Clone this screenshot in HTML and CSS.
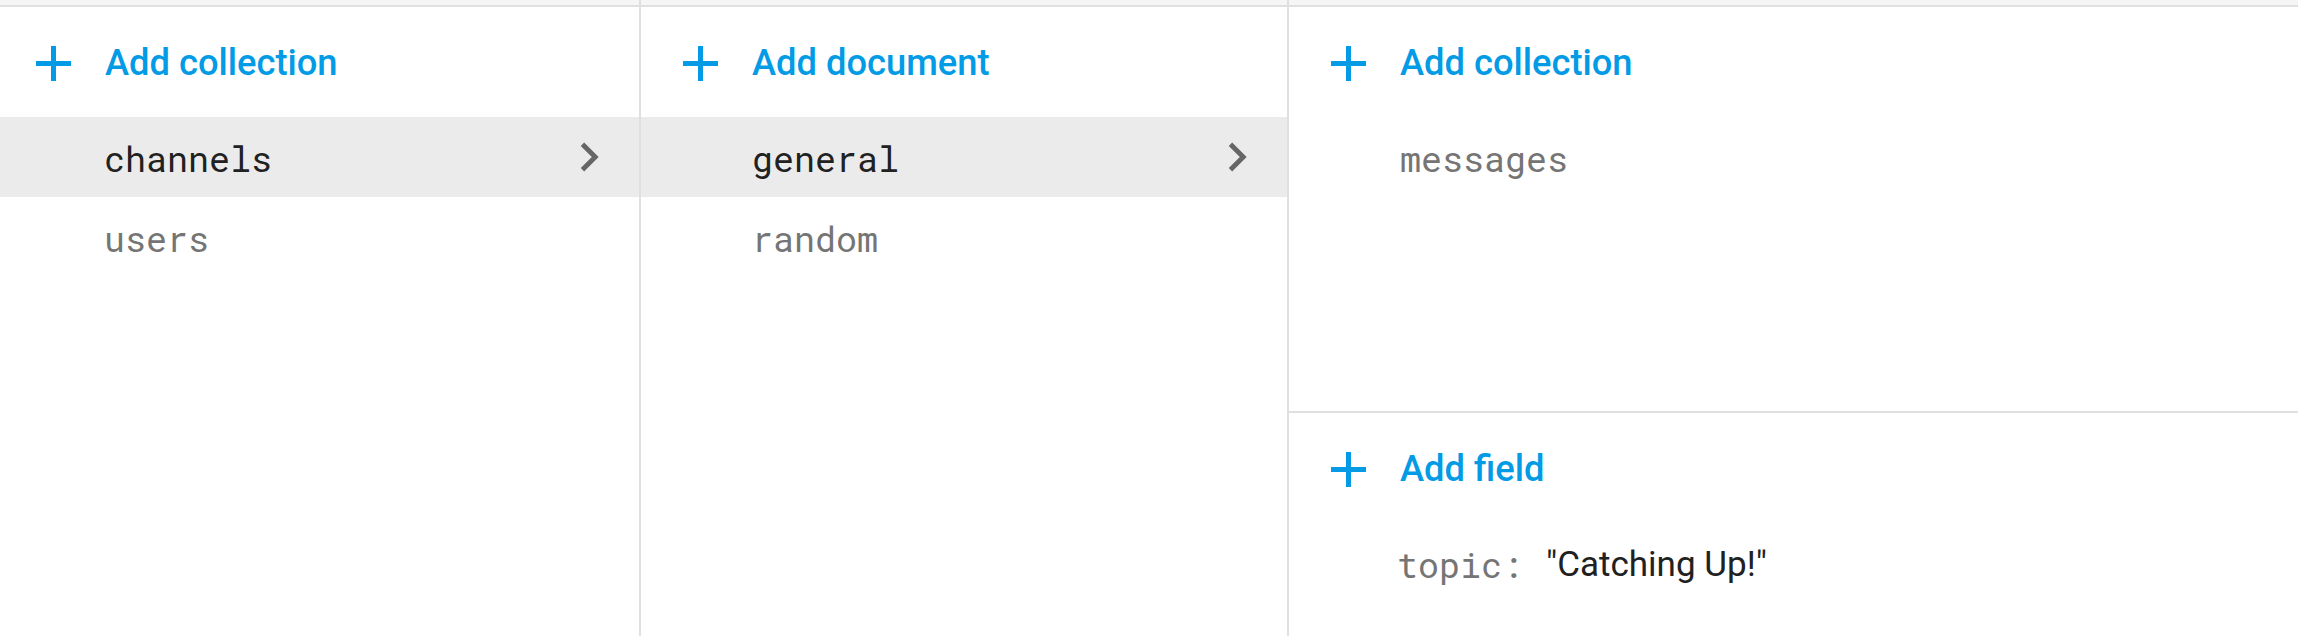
FILE: index.html
```html
<!DOCTYPE html>
<html lang="en">
<head>
<meta charset="utf-8">
<title>Firestore data</title>
<link rel="stylesheet" href="styles.css">
</head>
<body>
<div class="panels">
  <section class="col col-first">
    <div class="strip"></div>
    <div class="add-row">
      <svg class="plus" viewBox="5 5 14 14" aria-hidden="true"><path d="M19 13h-6v6h-2v-6H5v-2h6V5h2v6h6v2z"/></svg>
      <span class="add-label">Add collection</span>
    </div>
    <div class="item selected">
      <span class="name">channels</span>
      <svg class="chev" viewBox="0 0 24 24" aria-hidden="true"><path d="M10 6L8.59 7.41 13.17 12l-4.58 4.59L10 18l6-6z"/></svg>
    </div>
    <div class="item"><span class="name muted">users</span></div>
  </section>
  <section class="col col-second">
    <div class="strip"></div>
    <div class="add-row">
      <svg class="plus" viewBox="5 5 14 14" aria-hidden="true"><path d="M19 13h-6v6h-2v-6H5v-2h6V5h2v6h6v2z"/></svg>
      <span class="add-label">Add document</span>
    </div>
    <div class="item selected">
      <span class="name">general</span>
      <svg class="chev" viewBox="0 0 24 24" aria-hidden="true"><path d="M10 6L8.59 7.41 13.17 12l-4.58 4.59L10 18l6-6z"/></svg>
    </div>
    <div class="item"><span class="name muted">random</span></div>
  </section>
  <section class="col col-third">
    <div class="strip"></div>
    <div class="subsection collections">
      <div class="add-row">
        <svg class="plus" viewBox="5 5 14 14" aria-hidden="true"><path d="M19 13h-6v6h-2v-6H5v-2h6V5h2v6h6v2z"/></svg>
        <span class="add-label">Add collection</span>
      </div>
      <div class="item"><span class="name muted">messages</span></div>
    </div>
    <div class="subsection fields">
      <div class="add-row">
        <svg class="plus" viewBox="5 5 14 14" aria-hidden="true"><path d="M19 13h-6v6h-2v-6H5v-2h6V5h2v6h6v2z"/></svg>
        <span class="add-label">Add field</span>
      </div>
      <div class="item field">
        <span class="name muted key">topic:</span>
        <span class="value">"Catching Up!"</span>
      </div>
    </div>
  </section>
</div>
</body>
</html>
```

FILE: styles.css
```css
html, body {
  margin: 0;
  padding: 0;
  background: #ffffff;
}

body {
  font-family: Roboto, "Noto Sans", "Liberation Sans", sans-serif;
  width: 2298px;
  height: 636px;
  overflow: hidden;
}

.panels {
  display: flex;
  height: 636px;
}

.col {
  box-sizing: border-box;
  height: 100%;
  border-right: 2px solid #e0e0e0;
  display: flex;
  flex-direction: column;
}

.col-first {
  width: 641px;
  flex: none;
}

.col-second {
  width: 648px;
  flex: none;
}

.col-third {
  flex: 1;
  border-right: none;
}

.strip {
  height: 5px;
  background: #f5f5f5;
  border-bottom: 2px solid #e0e0e0;
  flex: none;
}

.add-row {
  height: 110px;
  display: flex;
  align-items: center;
  padding-left: 42px;
  padding-top: 2px;
  box-sizing: border-box;
  flex: none;
}

.col-first .add-row {
  padding-left: 36px;
}

.plus {
  width: 35px;
  height: 35px;
  fill: #039be5;
  margin-right: 34px;
  flex: none;
}

.add-label {
  color: #039be5;
  font-weight: 500;
  font-size: 36.3px;
  line-height: 1;
}

.item {
  height: 80px;
  display: flex;
  align-items: center;
  justify-content: space-between;
  padding-left: 111px;
  padding-right: 21px;
  padding-top: 2px;
  box-sizing: border-box;
  flex: none;
}

.col-first .item {
  padding-left: 104px;
}

.item.selected {
  background: #ebebeb;
}

.name {
  font-family: "Roboto Mono", "DejaVu Sans Mono", "Liberation Mono", monospace;
  font-size: 35px;
  color: #212121;
  line-height: 1;
}

.name.muted {
  color: #757575;
}

.chev {
  width: 58px;
  height: 58px;
  fill: #666666;
  flex: none;
  margin-top: -2px;
}

.subsection.collections {
  height: 404px;
  border-bottom: 2px solid #e0e0e0;
  flex: none;
}

.item.field {
  justify-content: flex-start;
  padding-left: 108px;
}

.key {
  margin-right: 23px;
}

.value {
  font-family: Roboto, "Noto Sans", "Liberation Sans", sans-serif;
  font-size: 35px;
  color: #212121;
  line-height: 1;
}
```
